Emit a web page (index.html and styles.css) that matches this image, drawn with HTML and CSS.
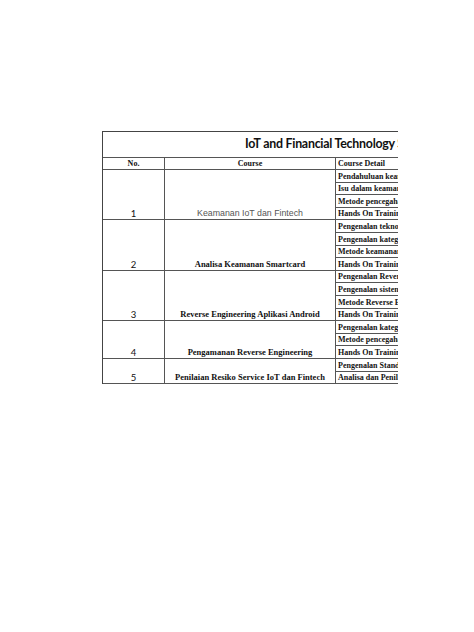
FILE: index.html
```html
<!DOCTYPE html>
<html>
<head>
<meta charset="utf-8">
<link rel="stylesheet" href="styles.css">
</head>
<body>
<div class="page">
  <div class="clip">
    <div class="sheet">
      <div class="title">IoT and Financial Technology Security Training</div>
      <div class="hd c1">No.</div>
      <div class="hd c2">Course</div>
      <div class="hd c3">Course Detail</div>

      <div class="num r1">1</div>
      <div class="course sans r1">Keamanan IoT dan Fintech</div>
      <div class="det">Pendahuluan keamanan IoT dan Fintech</div>
      <div class="det">Isu dalam keamanan IoT dan Fintech</div>
      <div class="det">Metode pencegahan serangan</div>
      <div class="det">Hands On Training</div>

      <div class="num r2">2</div>
      <div class="course r2">Analisa Keamanan Smartcard</div>
      <div class="det">Pengenalan teknologi Smartcard</div>
      <div class="det">Pengenalan kategori serangan Smartcard</div>
      <div class="det">Metode keamanan Smartcard</div>
      <div class="det">Hands On Training</div>

      <div class="num r3">3</div>
      <div class="course r3">Reverse Engineering Aplikasi Android</div>
      <div class="det">Pengenalan Reverse Engineering</div>
      <div class="det">Pengenalan sistem Android</div>
      <div class="det">Metode Reverse Engineering</div>
      <div class="det">Hands On Training</div>

      <div class="num r4">4</div>
      <div class="course r4">Pengamanan Reverse Engineering</div>
      <div class="det">Pengenalan kategori serangan</div>
      <div class="det">Metode pencegahan Reverse Engineering</div>
      <div class="det">Hands On Training</div>

      <div class="num r5">5</div>
      <div class="course r5">Penilaian Resiko Service IoT dan Fintech</div>
      <div class="det">Pengenalan Standar Penilaian Resiko</div>
      <div class="det">Analisa dan Penilaian Resiko</div>
    </div>
  </div>
</div>
</body>
</html>
```
FILE: styles.css
```css
html, body {
  margin: 0;
  padding: 0;
  background: #fff;
}
.page {
  width: 474px;
  height: 632px;
  padding: 131px 0 0 102px;
  box-sizing: border-box;
}
.clip {
  width: 296px;
  overflow: hidden;
}
.sheet {
  display: grid;
  grid-template-columns: 62px 171px 220px;
  grid-template-rows: 26px 12px repeat(17, 12.6px);
  border-left: 1px solid #444;
  border-top: 1px solid #444;
  width: 453px;
  box-sizing: border-box;
  color: #111;
}
.sheet > div {
  border-right: 1px solid #555;
  border-bottom: 1px solid #555;
  box-sizing: border-box;
  white-space: nowrap;
  overflow: hidden;
}
.title {
  grid-column: 1 / 4;
  font-family: Lato, "Liberation Sans", sans-serif;
  font-weight: bold;
  font-size: 12.4px;
  letter-spacing: -0.25px;
  display: flex;
  align-items: center;
  padding-left: 142px;
  padding-bottom: 3px;
  color: #111;
}
.hd {
  font-family: "Liberation Serif", serif;
  font-weight: bold;
  font-size: 8px;
  display: flex;
  align-items: flex-end;
  justify-content: center;
  line-height: 10px;
}
.hd.c3 {
  justify-content: flex-start;
  padding-left: 2px;
}
.num {
  grid-column: 1;
  font-family: Lato, "Liberation Sans", sans-serif;
  font-size: 9.5px;
  display: flex;
  align-items: flex-end;
  justify-content: center;
  line-height: 11px;
}
.course {
  grid-column: 2;
  font-family: "Liberation Serif", serif;
  font-weight: bold;
  font-size: 8.5px;
  display: flex;
  align-items: flex-end;
  justify-content: center;
  line-height: 11px;
}
.course.sans {
  font-family: "Liberation Sans", sans-serif;
  font-weight: normal;
  font-size: 8.8px;
  color: #555;
}
.r1 { grid-row: 3 / span 4; }
.r2 { grid-row: 7 / span 4; }
.r3 { grid-row: 11 / span 4; }
.r4 { grid-row: 15 / span 3; }
.r5 { grid-row: 18 / span 2; }
.det {
  grid-column: 3;
  font-family: "Liberation Serif", serif;
  font-weight: bold;
  font-size: 8px;
  display: flex;
  align-items: flex-end;
  padding-left: 2px;
  line-height: 11px;
}
```
